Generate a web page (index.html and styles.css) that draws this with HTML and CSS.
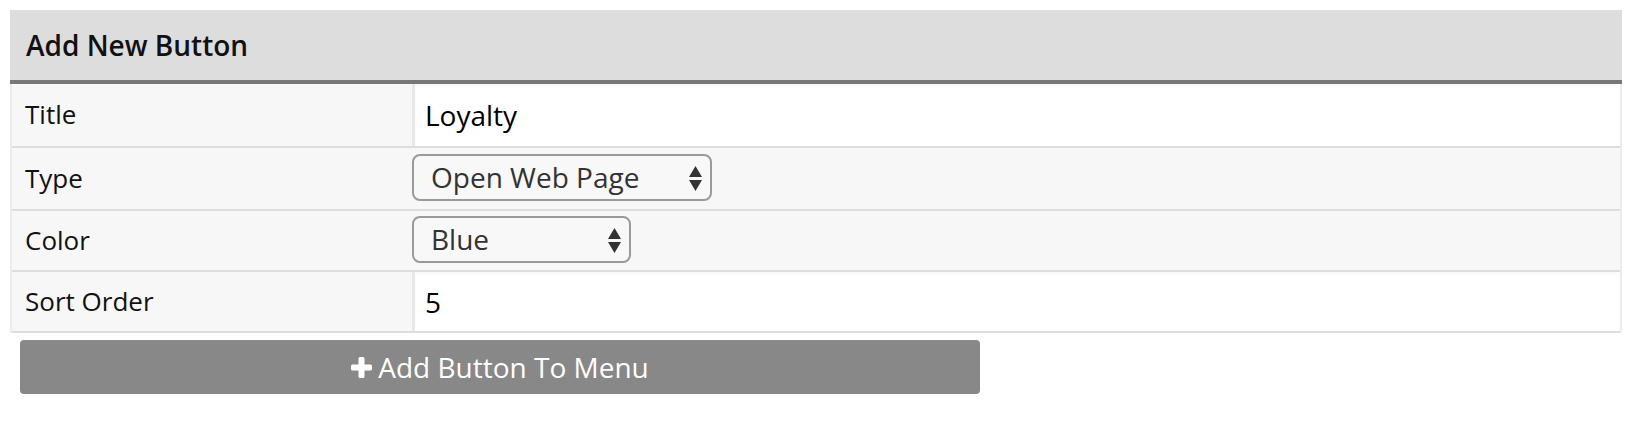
FILE: index.html
```html
<!DOCTYPE html>
<html>
<head>
<meta charset="utf-8">
<link rel="stylesheet" href="styles.css">
</head>
<body>
<div class="panel">
  <div class="panel-head">Add New Button</div>
  <div class="row row-title">
    <div class="label">Title</div>
    <div class="value"><input class="text-input" type="text" value="Loyalty"></div>
  </div>
  <div class="row row-type">
    <div class="label">Type</div>
    <div class="value sel-cell">
      <div class="select-wrap wide">
        <select class="select"><option>Open Web Page</option></select>
        <svg class="arrows" width="13" height="25" viewBox="0 0 13 25"><path d="M6.5 0 L13 11 L0 11 Z M0 14 L13 14 L6.5 25 Z" fill="#333"/></svg>
      </div>
    </div>
  </div>
  <div class="row row-color">
    <div class="label">Color</div>
    <div class="value sel-cell">
      <div class="select-wrap narrow">
        <select class="select"><option>Blue</option></select>
        <svg class="arrows" width="13" height="25" viewBox="0 0 13 25"><path d="M6.5 0 L13 11 L0 11 Z M0 14 L13 14 L6.5 25 Z" fill="#333"/></svg>
      </div>
    </div>
  </div>
  <div class="row row-sort">
    <div class="label">Sort Order</div>
    <div class="value"><input class="text-input" type="text" value="5"></div>
  </div>
</div>
<button class="add-btn" type="button"><svg class="plus" width="21" height="21" viewBox="0 0 21 21"><path d="M7.5 1.5 Q7.5 0 9 0 H12 Q13.5 0 13.5 1.5 V7.5 H19.5 Q21 7.5 21 9 V12 Q21 13.5 19.5 13.5 H13.5 V19.5 Q13.5 21 12 21 H9 Q7.5 21 7.5 19.5 V13.5 H1.5 Q0 13.5 0 12 V9 Q0 7.5 1.5 7.5 H7.5 Z" fill="#fff"/></svg><span>Add Button To Menu</span></button>
</body>
</html>
```
FILE: styles.css
```css
* { box-sizing: border-box; }
body {
  margin: 0;
  padding: 10px 12px 0 10px;
  background: #fff;
  font-family: "Open Sans", "Liberation Sans", sans-serif;
  color: #111;
}
.panel {
  width: 1612px;
  border-left: 2px solid #ececec;
  border-right: 2px solid #ececec;
}
.panel-head {
  height: 74px;
  margin: 0 -2px;
  background: #dddddd;
  border-bottom: 4px solid #777777;
  font-size: 28px;
  font-weight: 600;
  color: #111;
  padding-left: 16px;
  display: flex;
  align-items: center;
}
.row {
  display: grid;
  grid-template-columns: 400px 1fr;
  border-bottom: 2px solid #dddddd;
  background: #f7f7f7;
}
.row-title { height: 64px; }
.row-type { height: 63px; }
.row-color { height: 61px; }
.row-sort { height: 61px; }
.label {
  display: flex;
  align-items: center;
  padding: 0 0 2px 13px;
  font-size: 26px;
  color: #111;
}
.value { display: flex; }
.text-input {
  width: 100%;
  height: 100%;
  border: none;
  border-left: 3px solid #e8e8e8;
  background: #fff;
  box-shadow: inset 0 3px 3px rgba(0,0,0,0.025);
  padding: 0 0 0 10px;
  font-family: "Open Sans", "Liberation Sans", sans-serif;
  font-size: 28px;
  color: #000;
  outline: none;
}
.sel-cell { align-items: flex-start; }
.row-type .sel-cell { padding-top: 6px; }
.row-color .sel-cell { padding-top: 5px; }
.select-wrap {
  position: relative;
  height: 47px;
}
.select-wrap.wide { width: 300px; }
.select-wrap.narrow { width: 219px; }
.select {
  -webkit-appearance: none;
  appearance: none;
  width: 100%;
  height: 100%;
  border: 2px solid #9a9a9a;
  border-radius: 8px;
  background: #f8f8f8;
  padding: 0 0 2px 17px;
  font-family: "Open Sans", "Liberation Sans", sans-serif;
  font-size: 28px;
  color: #333;
  outline: none;
}
.arrows {
  position: absolute;
  right: 10px;
  top: 12px;
  pointer-events: none;
}
.add-btn {
  margin: 7px 0 0 10px;
  width: 960px;
  height: 54px;
  background: #888888;
  border: none;
  border-radius: 4px;
  color: #fff;
  font-family: "Open Sans", "Liberation Sans", sans-serif;
  font-size: 28px;
  display: flex;
  align-items: center;
  justify-content: center;
  gap: 6px;
  padding: 0;
}
.plus { display: block; }
```
